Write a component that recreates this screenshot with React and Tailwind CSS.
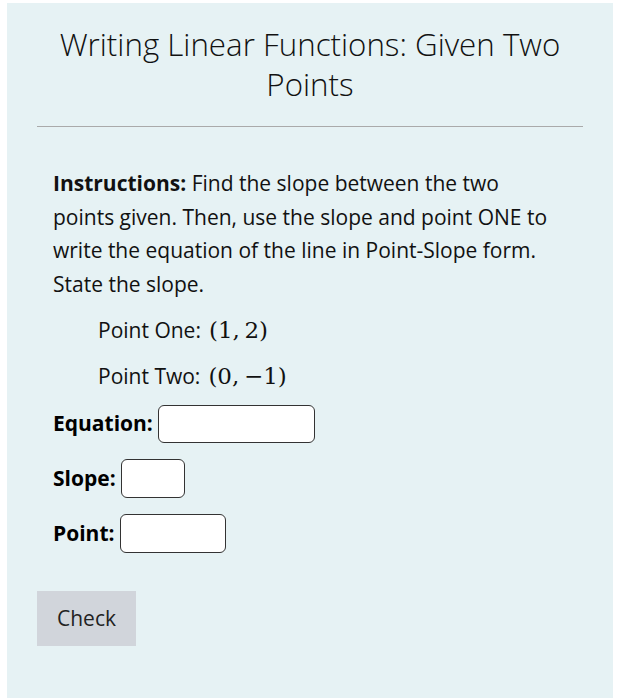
export default function App() {
  return (
    <div className="min-h-screen bg-white font-['Open_Sans',sans-serif] text-black">
      <div className="ml-[7px] mt-[3px] w-[606px] bg-[#e6f2f4] px-[30px] pb-[80px]">
        <h1 className="pt-[21px] text-center text-[31.3px] font-light leading-[40px] text-[#111]">
          Writing Linear Functions: Given Two Points
        </h1>
        <hr className="mt-[22px] border-0 border-t border-[#aaaaaa]" />

        <div className="px-[16px]">
          <p className="mt-[40px] text-[21px] leading-[33.5px] text-[#111]">
            <b>Instructions:</b> Find the slope between the two
            <br />
            points given. Then, use the slope and point ONE to
            <br />
            write the equation of the line in Point-Slope form.
            <br />
            State the slope.
          </p>

          <div className="ml-[45px] mt-[12px] flex flex-col gap-[12px] text-[21px] leading-[34px] text-[#111]">
            <div className="flex items-center gap-[8px]">
              <span>Point One:</span>
              <span className="font-['DejaVu_Serif',serif] text-[23px] leading-[34px]">(1,&thinsp;2)</span>
            </div>
            <div className="flex items-center gap-[8px]">
              <span>Point Two:</span>
              <span className="font-['DejaVu_Serif',serif] text-[23px] leading-[34px]">(0,&thinsp;−1)</span>
            </div>
          </div>

          <div className="mt-[12px] flex flex-col gap-[16px] text-[21px] font-bold">
            <div className="flex items-center gap-[5px]">
              <span>Equation:</span>
              <input className="h-[38px] w-[157px] rounded-[6px] border border-[#333] bg-white" />
            </div>
            <div className="flex items-center gap-[5px]">
              <span>Slope:</span>
              <input className="h-[39px] w-[64px] rounded-[6px] border border-[#333] bg-white" />
            </div>
            <div className="flex items-center gap-[5px]">
              <span>Point:</span>
              <input className="h-[39px] w-[106px] rounded-[6px] border border-[#333] bg-white" />
            </div>
          </div>
        </div>

        <button className="mt-[38px] h-[55px] w-[99px] bg-[#d1d5db] text-[21px] text-[#222]">
          Check
        </button>
      </div>
    </div>
  );
}
